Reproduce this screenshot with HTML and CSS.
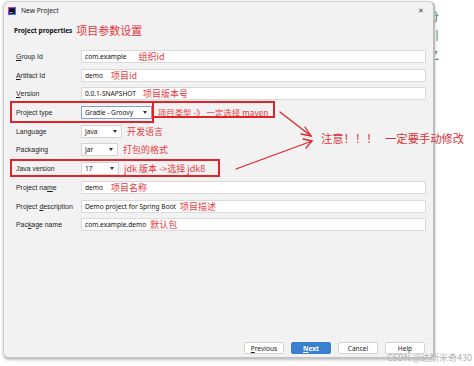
FILE: index.html
```html
<!DOCTYPE html>
<html lang="zh-CN">
<head>
  <meta charset="UTF-8">
  <title>New Project</title>
  <link rel="stylesheet" href="styles.css">
</head>
<body>
<div class="screen">
  <div class="dialog">
    <div class="titlebar">
      <svg class="app-icon" width="8" height="8" viewBox="0 0 8 8">
        <defs>
          <linearGradient id="ij" x1="0" y1="0" x2="1" y2="1">
            <stop offset="0" stop-color="#ff3aa0"/>
            <stop offset="0.5" stop-color="#6b4cf0"/>
            <stop offset="1" stop-color="#1e8fff"/>
          </linearGradient>
        </defs>
        <rect width="8" height="8" fill="url(#ij)"/>
        <rect x="1.2" y="1.2" width="5.6" height="5.6" fill="#111"/>
        <rect x="2" y="5.3" width="2.6" height="0.7" fill="#fff"/>
      </svg>
      <span class="title">New Project</span>
      <span class="close">&#x2715;</span>
    </div>

    <div class="heading">
      <span class="heading-text">Project properties</span>
      <span class="note note-big">项目参数设置</span>
    </div>

    <div class="form">
      <label class="label"><u>G</u>roup Id</label>
      <div class="field"><span class="value">com.example</span><span class="note gap-group">组织id</span></div>

      <label class="label"><u>A</u>rtifact Id</label>
      <div class="field"><span class="value">demo</span><span class="note gap-artifact">项目id</span></div>

      <label class="label"><u>V</u>ersion</label>
      <div class="field"><span class="value">0.0.1-SNAPSHOT</span><span class="note gap-version">项目版本号</span></div>

      <label class="label">Project type</label>
      <div class="cell">
        <div class="select select-focus w-gradle"><span class="value">Gradle - Groovy</span><span class="arrow"></span></div>
        <span class="note note-type">项目类型 -》 一定选择 maven</span>
      </div>

      <label class="label">Language</label>
      <div class="cell">
        <div class="select w-java"><span class="value">Java</span><span class="arrow"></span></div>
        <span class="note">开发语言</span>
      </div>

      <label class="label">Packaging</label>
      <div class="cell">
        <div class="select w-jar"><span class="value">Jar</span><span class="arrow"></span></div>
        <span class="note">打包的格式</span>
      </div>

      <label class="label">Java version</label>
      <div class="cell">
        <div class="select w-17"><span class="value">17</span><span class="arrow"></span></div>
        <span class="note note-jdk">jdk 版本 -&gt;选择 jdk8</span>
      </div>

      <label class="label">Project na<u>m</u>e</label>
      <div class="field"><span class="value">demo</span><span class="note gap-artifact">项目名称</span></div>

      <label class="label">Project <u>d</u>escription</label>
      <div class="field"><span class="value">Demo project for Spring Boot</span><span class="note gap-desc">项目描述</span></div>

      <label class="label">Pac<u>k</u>age name</label>
      <div class="field"><span class="value">com.example.demo</span><span class="note gap-package">默认包</span></div>
    </div>

    <div class="footer">
      <button class="btn"><u>P</u>revious</button>
      <button class="btn btn-primary"><u>N</u>ext</button>
      <button class="btn">Cancel</button>
      <button class="btn">Help</button>
    </div>
  </div>

  <div class="behind">
    <span>分</span>
    <span>引</span>
    <span>之</span>
    <span>]</span>
  </div>

  <div class="mark mark-type"></div>
  <div class="mark mark-type-note"></div>
  <div class="mark mark-jdk"></div>

  <svg class="arrows" width="474" height="366" viewBox="0 0 474 366">
    <g stroke="#e0242c" stroke-width="1.3" fill="none" stroke-linecap="round">
      <path d="M280 112 L311 136"/>
      <path d="M305 127 L311 136 L301 134"/>
      <path d="M236 169 L312 141"/>
      <path d="M303 139 L312 141 L306 148"/>
    </g>
  </svg>

  <div class="warning">注意！！！&nbsp;&nbsp;&nbsp;一定要手动修改</div>
  <div class="watermark">CSDN @达斯米奇430</div>
</div>
</body>
</html>
```

FILE: styles.css
```css
body {
  margin: 0;
  background-color: #fff;
  font-family: "Noto Sans", "Liberation Sans", sans-serif;
}
.screen {
  position: relative;
  width: 474px;
  height: 366px;
  overflow: hidden;
  display: flex;
  padding: 1px 0 0 3px;
  box-sizing: border-box;
}
.dialog {
  width: 432px;
  height: 358px;
  box-sizing: border-box;
  background-color: #f2f2f2;
  border: 1px solid #cfcfcf;
  border-right: 2px solid #bdbdbd;
  border-bottom: 2px solid #c4c4c4;
  border-radius: 6px;
  box-shadow: 0 1px 3px rgba(0,0,0,0.25);
  display: flex;
  flex-direction: column;
  position: relative;
  z-index: 1;
}
.titlebar {
  height: 15px;
  display: flex;
  align-items: center;
  padding: 1px 9px 0 4px;
}
.app-icon {
  margin-right: 5px;
}
.title {
  font-size: 6.7px;
  color: #1a1a1a;
  flex: 1;
}
.close {
  font-size: 7px;
  color: #444;
}
.heading {
  height: 14px;
  margin-top: 5px;
  padding-left: 10px;
  display: flex;
  align-items: center;
}
.heading-text {
  font-size: 6.5px;
  font-weight: bold;
  color: #111;
  margin-right: 4px;
}
.note {
  font-family: "Noto Sans CJK SC", sans-serif;
  font-size: 9px;
  color: #e8383d;
  white-space: nowrap;
  line-height: 1;
}
.note-big {
  font-size: 11px;
}
.form {
  margin-top: 13px;
  padding: 0 7px 0 12px;
  display: grid;
  grid-template-columns: 65px 1fr;
  grid-auto-rows: 13px;
  row-gap: 5.7px;
}
.label {
  font-family: "Liberation Sans", Arial, sans-serif;
  font-size: 6.9px;
  color: #1e1e1e;
  display: flex;
  align-items: center;
  white-space: pre;
}
.field {
  background-color: #fff;
  border: 1px solid #dadada;
  display: flex;
  align-items: center;
  padding-left: 3px;
  overflow: hidden;
}
.value {
  font-size: 6.6px;
  color: #111;
  white-space: nowrap;
}
.gap-group { margin-left: 12px; }
.gap-artifact { margin-left: 8px; }
.gap-version { margin-left: 7px; }
.gap-desc { margin-left: 4px; }
.gap-package { margin-left: 4px; }
.cell {
  display: flex;
  align-items: center;
}
.select {
  height: 13px;
  box-sizing: border-box;
  background-color: #fff;
  border: 1px solid #d4d4d4;
  display: flex;
  align-items: center;
  justify-content: space-between;
  padding: 0 4px 0 3px;
  margin-right: 5px;
}
.select-focus {
  border-color: #7aa3d9;
}
.arrow {
  width: 0;
  height: 0;
  border-left: 2.5px solid transparent;
  border-right: 2.5px solid transparent;
  border-top: 3px solid #333;
}
.w-gradle { width: 71px; }
.w-java { width: 41px; }
.w-jar { width: 37px; }
.w-17 { width: 38px; }
.note-type {
  margin-left: 1px;
  font-size: 8.4px;
}
.footer {
  margin-top: auto;
  display: flex;
  justify-content: flex-end;
  gap: 7px;
  padding: 0 8px 3px 0;
}
.btn {
  width: 40px;
  height: 12px;
  padding: 0;
  font-family: "Noto Sans", "Liberation Sans", sans-serif;
  font-size: 6.6px;
  color: #1a1a1a;
  background-color: #fff;
  border: 1px solid #d2d2d2;
  border-radius: 2px;
}
.btn-primary {
  background-color: #3b7fd0;
  border-color: #3b7fd0;
  color: #fff;
  font-weight: bold;
}
.behind {
  width: 6px;
  overflow: hidden;
  display: flex;
  flex-direction: column;
  padding-top: 6px;
  margin-left: -1px;
}
.behind span {
  font-family: "Noto Sans CJK SC", sans-serif;
  font-size: 11px;
  line-height: 19px;
  color: #2f8a3a;
  margin-left: -6px;
}
.mark {
  position: absolute;
  border: 2px solid #e0242c;
  box-sizing: border-box;
  z-index: 2;
}
.mark-type {
  left: 10px;
  top: 101px;
  width: 144px;
  height: 22px;
}
.mark-type-note {
  left: 152px;
  top: 101px;
  width: 123px;
  height: 17px;
}
.mark-jdk {
  left: 10px;
  top: 159px;
  width: 210px;
  height: 18px;
}
.arrows {
  position: absolute;
  left: 0;
  top: 0;
  z-index: 2;
}
.warning {
  position: absolute;
  left: 321px;
  top: 131px;
  z-index: 2;
  font-family: "Noto Sans CJK SC", serif;
  font-size: 11.3px;
  line-height: 14px;
  color: #d8323a;
  white-space: nowrap;
}
.watermark {
  position: absolute;
  left: 387px;
  top: 352px;
  z-index: 2;
  font-family: "Noto Sans CJK SC", sans-serif;
  font-size: 9px;
  line-height: 12px;
  color: #b4b4b4;
  white-space: nowrap;
}
```
